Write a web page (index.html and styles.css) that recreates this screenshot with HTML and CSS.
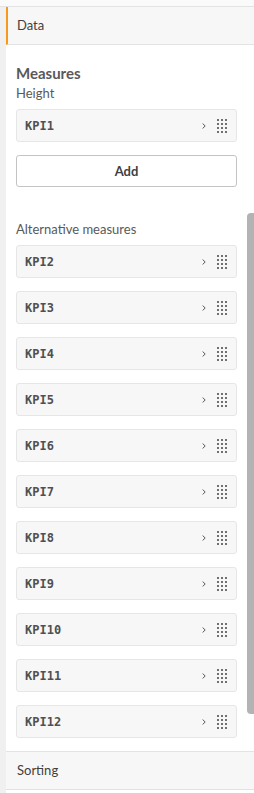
FILE: index.html
```html
<!DOCTYPE html>
<html>
  <head>
    <link rel="stylesheet" href="styles.css">
  </head>
  <body>
    <div class='topline'></div>
    <div class='panel'>
      <div class='section active'>Data</div>

      <div class='content'>
        <div class='title'>Measures</div>
        <div class='label'>Height</div>
        <div class='item'><span>KPI1</span><i class='chev'></i><i class='grip'></i></div>
        <div class='add'>Add</div>

        <div class='label alt'>Alternative measures</div>
        <div class='item'><span>KPI2</span><i class='chev'></i><i class='grip'></i></div>
        <div class='item'><span>KPI3</span><i class='chev'></i><i class='grip'></i></div>
        <div class='item'><span>KPI4</span><i class='chev'></i><i class='grip'></i></div>
        <div class='item'><span>KPI5</span><i class='chev'></i><i class='grip'></i></div>
        <div class='item'><span>KPI6</span><i class='chev'></i><i class='grip'></i></div>
        <div class='item'><span>KPI7</span><i class='chev'></i><i class='grip'></i></div>
        <div class='item'><span>KPI8</span><i class='chev'></i><i class='grip'></i></div>
        <div class='item'><span>KPI9</span><i class='chev'></i><i class='grip'></i></div>
        <div class='item'><span>KPI10</span><i class='chev'></i><i class='grip'></i></div>
        <div class='item'><span>KPI11</span><i class='chev'></i><i class='grip'></i></div>
        <div class='item'><span>KPI12</span><i class='chev'></i><i class='grip'></i></div>
        <!-- next card, cut off by the sorting header -->
        <div class='item'></div>

        <div class='thumb'></div>
      </div>

      <div class='section'>Sorting</div>
    </div>
  </body>
</html>
```

FILE: styles.css
```css
body{
  margin:0;
  background-color:#f0f0f0;
  font-family:Lato,'Open Sans',sans-serif;
  color:#595959;
}

.topline{
  height:6px;
  background-color:#fafafa;
  border-bottom:1px solid #e3e3e3;
}

.panel{
  margin-left:6px;
  background-color:white;
  height:786px;
}

.section{
  height:37px;
  line-height:37px;
  background-color:#f7f7f7;
  border-bottom:1px solid #e3e3e3;
  padding-left:11px;
  font-size:13px;
  color:#404040;
}

.section.active{
  border-left:2px solid #f8981d;
  padding-left:9px;
}

.content{
  position:relative;
  height:707px;
  overflow:hidden;
  padding:19px 17px 0 10px;
  box-sizing:border-box;
  border-bottom:1px solid #e3e3e3;
}

.title{
  font-size:15px;
  font-weight:bold;
  line-height:18px;
  color:#595959;
}

.label{
  font-size:13px;
  line-height:17px;
  margin:3px 0 7px;
  color:#595959;
}

.label.alt{
  margin:34px 0 7px;
}

.item{
  display:flex;
  align-items:center;
  height:31px;
  margin-bottom:13px;
  background-color:#f7f7f7;
  border:1px solid #e6e6e6;
  border-radius:3px;
  padding:0 9px 0 8px;
}

.item span{
  flex:1;
  font-family:'DejaVu Sans Mono',monospace;
  font-weight:bold;
  font-size:12px;
  color:#505050;
}

.chev{
  width:4px;
  height:6px;
  margin-right:11px;
  background:no-repeat center/4px 6px url("data:image/svg+xml,%3Csvg xmlns='http://www.w3.org/2000/svg' viewBox='0 0 4 6'%3E%3Cpath d='M0.6 0.5 L3.2 3 L0.6 5.5' fill='none' stroke='%23595959' stroke-width='1'/%3E%3C/svg%3E");
}

.grip{
  width:10px;
  height:14px;
  background-image:radial-gradient(circle, #707070 0.9px, transparent 1.1px);
  background-size:4px 4px;
  background-position:-1px -1px;
}

.add{
  height:30px;
  line-height:30px;
  margin-top:13px;
  border:1px solid #c4c4c4;
  border-radius:3px;
  text-align:center;
  font-weight:bold;
  font-size:13px;
  color:#404040;
}

.thumb{
  position:absolute;
  right:0;
  top:168px;
  width:7px;
  height:501px;
  background-color:#b3b3b3;
  border-radius:4px 0 0 4px;
}
```
